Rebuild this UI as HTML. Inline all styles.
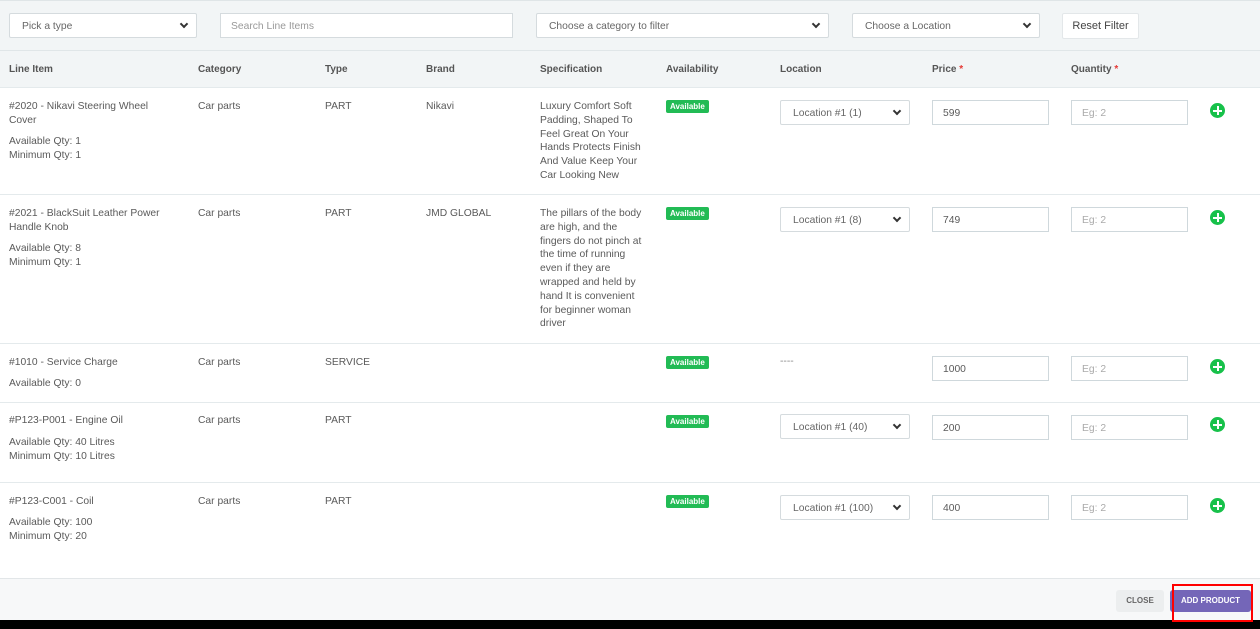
<!DOCTYPE html>
<html><head><meta charset="utf-8"><style>
*{box-sizing:border-box;margin:0;padding:0}
body{width:1260px;height:629px;overflow:hidden;background:#fff;font-family:"Liberation Sans",sans-serif;font-size:10.3px;color:#5a5a5a;position:relative}
.a{position:absolute}
.sel{position:absolute;background:#fff;border:1px solid #d5dbde;border-radius:2px;height:25px;padding:0 12px;line-height:25px;color:#666;font-size:10.3px}
.chev{position:absolute;right:9px;top:7px;width:6px;height:6px;border-right:2px solid #333;border-bottom:2px solid #333;transform:rotate(45deg)}
.inp{position:absolute;background:#fff;border:1px solid #cfd8dc;height:25px;padding:0 10px;line-height:25px;font-size:10.3px}
.th{position:absolute;top:64px;font-weight:bold;color:#555;font-size:10px}
.hr{position:absolute;left:0;width:1260px;height:1px;background:#e4eaec}
.badge{position:absolute;background:#22bb55;color:#fff;font-weight:bold;font-size:8px;padding:0 4px;height:13px;line-height:13px;border-radius:2px}
.plus{position:absolute;width:15px;height:15px;border-radius:50%;background:#17c14a}
.plus:before{content:"";position:absolute;left:3px;top:6.5px;width:9px;height:2px;background:#fff}
.plus:after{content:"";position:absolute;left:6.5px;top:3px;width:2px;height:9px;background:#fff}
.t{position:absolute;line-height:14px;top:0}
.red{color:#e53935}
</style></head><body>
<div class="a" style="left:0;top:0;width:1260px;height:87px;background:#f2f5f6"></div>
<div class="hr" style="top:0;background:#dfe5e7"></div>
<div class="hr" style="top:50px;background:#e0e6e8"></div>
<div class="sel" style="left:9px;top:13px;width:188px">Pick a type<span class="chev"></span></div>
<div class="inp" style="left:220px;top:13px;width:293px;color:#999;border-color:#d5dbde">Search Line Items</div>
<div class="sel" style="left:536px;top:13px;width:293px">Choose a category to filter<span class="chev"></span></div>
<div class="sel" style="left:852px;top:13px;width:188px">Choose a Location<span class="chev"></span></div>
<div class="a" style="left:1062px;top:13px;width:77px;height:26px;background:#fff;border:1px solid #e3e7e9;border-radius:2px;text-align:center;line-height:24px;color:#444;font-size:11px">Reset Filter</div>
<div class="th" style="left:9px">Line Item</div>
<div class="th" style="left:198px">Category</div>
<div class="th" style="left:325px">Type</div>
<div class="th" style="left:426px">Brand</div>
<div class="th" style="left:540px">Specification</div>
<div class="th" style="left:666px">Availability</div>
<div class="th" style="left:780px">Location</div>
<div class="th" style="left:932px">Price <span class="red">*</span></div>
<div class="th" style="left:1071px">Quantity <span class="red">*</span></div>
<div class="hr" style="top:87px"></div>

<!-- row1 -->
<div class="t" style="left:9px;top:100px;width:150px">#2020 - Nikavi Steering Wheel Cover</div>
<div class="t" style="left:9px;top:135px">Available Qty: 1<br>Minimum Qty: 1</div>
<div class="t" style="left:198px;top:100px">Car parts</div>
<div class="t" style="left:325px;top:100px">PART</div>
<div class="t" style="left:426px;top:100px">Nikavi</div>
<div class="t" style="left:540px;top:100px;width:108px;line-height:13.8px">Luxury Comfort Soft Padding, Shaped To Feel Great On Your Hands Protects Finish And Value Keep Your Car Looking New</div>
<div class="badge" style="left:666px;top:100px">Available</div>
<div class="sel" style="left:780px;top:100px;width:130px">Location #1 (1)<span class="chev"></span></div>
<div class="inp" style="left:932px;top:100px;width:117px">599</div>
<div class="inp" style="left:1071px;top:100px;width:117px;color:#aaa">Eg: 2</div>
<div class="plus" style="left:1210px;top:103px"></div>
<div class="hr" style="top:194px"></div>

<!-- row2 -->
<div class="t" style="left:9px;top:207px;width:170px">#2021 - BlackSuit Leather Power Handle Knob</div>
<div class="t" style="left:9px;top:242px">Available Qty: 8<br>Minimum Qty: 1</div>
<div class="t" style="left:198px;top:207px">Car parts</div>
<div class="t" style="left:325px;top:207px">PART</div>
<div class="t" style="left:426px;top:207px">JMD GLOBAL</div>
<div class="t" style="left:540px;top:207px;width:108px;line-height:13.8px">The pillars of the body are high, and the fingers do not pinch at the time of running even if they are wrapped and held by hand It is convenient for beginner woman driver</div>
<div class="badge" style="left:666px;top:207px">Available</div>
<div class="sel" style="left:780px;top:207px;width:130px">Location #1 (8)<span class="chev"></span></div>
<div class="inp" style="left:932px;top:207px;width:117px">749</div>
<div class="inp" style="left:1071px;top:207px;width:117px;color:#aaa">Eg: 2</div>
<div class="plus" style="left:1210px;top:210px"></div>
<div class="hr" style="top:343px"></div>

<!-- row3 -->
<div class="t" style="left:9px;top:356px">#1010 - Service Charge</div>
<div class="t" style="left:9px;top:377px">Available Qty: 0</div>
<div class="t" style="left:198px;top:356px">Car parts</div>
<div class="t" style="left:325px;top:356px">SERVICE</div>
<div class="badge" style="left:666px;top:356px">Available</div>
<div class="t" style="left:780px;top:355px;color:#888">----</div>
<div class="inp" style="left:932px;top:356px;width:117px">1000</div>
<div class="inp" style="left:1071px;top:356px;width:117px;color:#aaa">Eg: 2</div>
<div class="plus" style="left:1210px;top:359px"></div>
<div class="hr" style="top:402px"></div>

<!-- row4 -->
<div class="t" style="left:9px;top:414px">#P123-P001 - Engine Oil</div>
<div class="t" style="left:9px;top:436px">Available Qty: 40 Litres<br>Minimum Qty: 10 Litres</div>
<div class="t" style="left:198px;top:414px">Car parts</div>
<div class="t" style="left:325px;top:414px">PART</div>
<div class="badge" style="left:666px;top:415px">Available</div>
<div class="sel" style="left:780px;top:414px;width:130px">Location #1 (40)<span class="chev"></span></div>
<div class="inp" style="left:932px;top:415px;width:117px">200</div>
<div class="inp" style="left:1071px;top:415px;width:117px;color:#aaa">Eg: 2</div>
<div class="plus" style="left:1210px;top:417px"></div>
<div class="hr" style="top:482px"></div>

<!-- row5 -->
<div class="t" style="left:9px;top:495px">#P123-C001 - Coil</div>
<div class="t" style="left:9px;top:516px">Available Qty: 100<br>Minimum Qty: 20</div>
<div class="t" style="left:198px;top:495px">Car parts</div>
<div class="t" style="left:325px;top:495px">PART</div>
<div class="badge" style="left:666px;top:495px">Available</div>
<div class="sel" style="left:780px;top:495px;width:130px">Location #1 (100)<span class="chev"></span></div>
<div class="inp" style="left:932px;top:495px;width:117px">400</div>
<div class="inp" style="left:1071px;top:495px;width:117px;color:#aaa">Eg: 2</div>
<div class="plus" style="left:1210px;top:498px"></div>

<!-- footer -->
<div class="a" style="left:0;top:578px;width:1260px;height:42px;background:#f7f8f9;border-top:1px solid #e2e6e8"></div>
<div class="a" style="left:1116px;top:590px;width:48px;height:22px;background:#eceeef;border-radius:3px;text-align:center;line-height:22px;font-size:8px;font-weight:bold;color:#666">CLOSE</div>
<div class="a" style="left:1170px;top:590px;width:81px;height:22px;background:#7466b8;border-radius:3px;text-align:center;line-height:22px;font-size:8px;font-weight:bold;color:#fff">ADD PRODUCT</div>
<div class="a" style="left:1172px;top:584px;width:81px;height:38px;border:2px solid #f00"></div>
<div class="a" style="left:0;top:620px;width:1260px;height:9px;background:#000"></div>
<div class="a" style="left:1172px;top:620px;width:81px;height:2px;background:#f00"></div>
</body></html>
